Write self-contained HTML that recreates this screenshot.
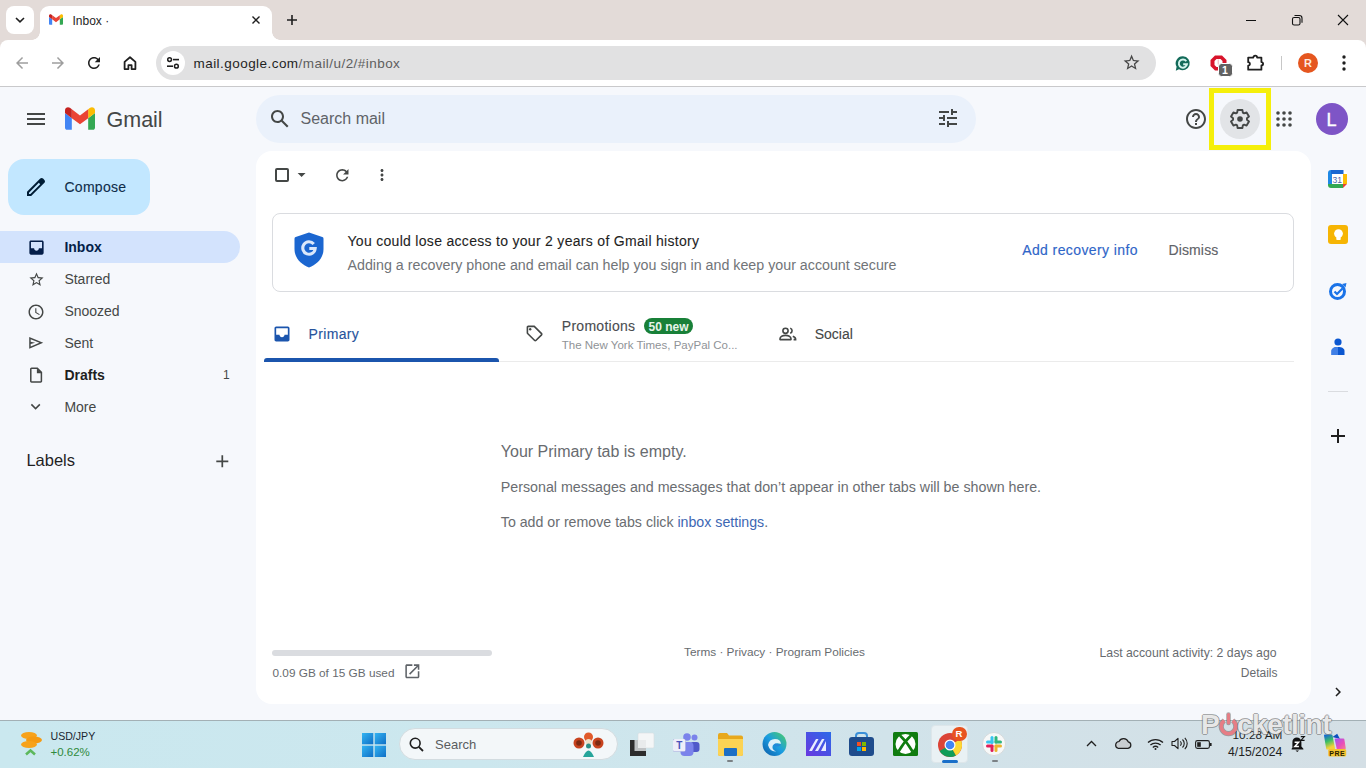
<!DOCTYPE html>
<html><head><meta charset="utf-8">
<style>
*{margin:0;padding:0;box-sizing:border-box}
html,body{width:1366px;height:768px;overflow:hidden;font-family:"Liberation Sans",sans-serif;background:#f6f8fc;position:relative}
.a{position:absolute}
.t{position:absolute;white-space:nowrap;line-height:1}
svg{position:absolute;overflow:visible}
</style></head><body>
<!-- ============ TAB STRIP ============ -->
<div class="a" style="left:0;top:0;width:1366px;height:50px;background:#e3dbd8"></div>
<div class="a" style="left:6px;top:6px;width:28px;height:28px;background:#fff;border-radius:8px"></div>
<svg style="left:14px;top:14px" width="12" height="12" viewBox="0 0 12 12"><path d="M2 4 L6 7.8 L10 4" fill="none" stroke="#1f1f1f" stroke-width="1.6"/></svg>
<div class="a" style="left:40px;top:6px;width:232px;height:34px;background:#fff;border-radius:9px 9px 0 0"></div>
<div class="a" style="left:272px;top:32px;width:8px;height:8px;background:radial-gradient(circle at 100% 0,#e3dbd8 7.5px,#fff 8px)"></div>
<div class="a" style="left:32px;top:32px;width:8px;height:8px;background:radial-gradient(circle at 0 0,#e3dbd8 7.5px,#fff 8px)"></div>
<svg style="left:49px;top:14px" width="14" height="11" viewBox="52 42 88 66"><path fill="#4285f4" d="M58 108h14V74L52 59v43c0 3.32 2.69 6 6 6"/><path fill="#34a853" d="M120 108h14c3.32 0 6-2.69 6-6V59l-20 15"/><path fill="#fbbc04" d="M120 48v26l20-15v-8c0-7.42-8.47-11.650-14.4-7.2"/><path fill="#ea4335" d="M72 74V48l24 18 24-18v26L96 92"/><path fill="#c5221f" d="M52 51v8l20 15V48l-5.6-4.2c-5.94-4.45-14.4-.22-14.4 7.2"/></svg>
<div class="t" style="left:72.5px;top:14.8px;font-size:12px;color:#1f1f1f">Inbox ·</div>
<svg style="left:251px;top:15px" width="10" height="10" viewBox="0 0 10 10"><path d="M1.5 1.5 L8.5 8.5 M8.5 1.5 L1.5 8.5" stroke="#1f1f1f" stroke-width="1.4"/></svg>
<svg style="left:286px;top:14px" width="12" height="12" viewBox="0 0 12 12"><path d="M6 1 V11 M1 6 H11" stroke="#1f1f1f" stroke-width="1.6"/></svg>
<!-- window controls -->
<svg style="left:1240px;top:0" width="126" height="40" viewBox="1240 0 126 40"><path d="M1246 20.5 H1256" stroke="#111" stroke-width="1"/><rect x="1292.5" y="17.5" width="7.5" height="7.5" rx="1.6" fill="none" stroke="#111" stroke-width="1.1"/><path d="M1294.5 15.5 H1299.3 Q1302 15.5 1302 18.2 V22.8" fill="none" stroke="#111" stroke-width="1.1"/><path d="M1338 15 L1348 25 M1348 15 L1338 25" stroke="#111" stroke-width="1.1"/></svg>
<!-- ============ TOOLBAR ============ -->
<div class="a" style="left:0;top:40px;width:1366px;height:46px;background:#fff;border-radius:8px 8px 0 0"></div>
<div class="a" style="left:0;top:86px;width:1366px;height:1px;background:#c9c9cb"></div>
<svg style="left:13px;top:54px" width="18" height="18" viewBox="0 0 24 24"><path fill="#9e9e9e" d="M20 11H7.83l5.59-5.59L12 4l-8 8 8 8 1.41-1.41L7.83 13H20v-2z"/></svg>
<svg style="left:49px;top:54px" width="18" height="18" viewBox="0 0 24 24"><path fill="#9e9e9e" d="M12 4l-1.41 1.41L16.17 11H4v2h12.17l-5.58 5.59L12 20l8-8z"/></svg>
<svg style="left:85px;top:54px" width="18" height="18" viewBox="0 0 24 24"><path fill="#1f1f1f" d="M17.65 6.35C16.2 4.9 14.21 4 12 4c-4.42 0-7.990 3.58-7.99 8s3.57 8 7.99 8c3.73 0 6.84-2.55 7.73-6h-2.08c-.82 2.33-3.04 4-5.650 4-3.31 0-6-2.69-6-6s2.69-6 6-6c1.66 0 3.14.69 4.22 1.78L13 11h7V4l-2.35 2.35z"/></svg>
<svg style="left:123px;top:56px" width="14" height="14" viewBox="0 0 14 14"><path d="M7 1.2 L12.4 5.9 V13.1 H8.6 V9.2 H5.4 V13.1 H1.6 V5.9 Z" fill="none" stroke="#1f1f1f" stroke-width="1.8" stroke-linejoin="round"/></svg>
<div class="a" style="left:156px;top:46px;width:1000px;height:34px;background:#e1e1e2;border-radius:17px"></div>
<div class="a" style="left:161px;top:51px;width:24px;height:24px;background:#fff;border-radius:12px"></div>
<svg style="left:166px;top:56px" width="14" height="14" viewBox="0 0 14 14"><circle cx="3.6" cy="3.6" r="1.9" fill="none" stroke="#1f1f1f" stroke-width="1.5"/><path d="M7 3.6 H13" stroke="#1f1f1f" stroke-width="1.6"/><circle cx="10.4" cy="10.2" r="1.9" fill="none" stroke="#1f1f1f" stroke-width="1.5"/><path d="M1 10.2 H7" stroke="#1f1f1f" stroke-width="1.6"/></svg>
<div class="t" style="left:193.5px;top:57.3px;font-size:13.5px;letter-spacing:0.45px;color:#1f1f1f">mail.google.com<span style="color:#5e5e5e">/mail/u/2/#inbox</span></div>
<svg style="left:1122.4px;top:52.9px" width="19.2" height="19.2" viewBox="0 0 24 24"><path fill="#474747" d="M22 9.24l-7.19-.62L12 2 9.19 8.63 2 9.24l5.46 4.73L5.82 21 12 17.27 18.18 21l-1.63-7.03L22 9.24zM12 15.4l-3.76 2.27 1-4.28-3.32-2.88 4.38-.38L12 6.1l1.71 4.04 4.38.38-3.32 2.88 1 4.28L12 15.4z"/></svg>
<!-- grammarly -->
<svg style="left:1174.5px;top:55.5px" width="15" height="15" viewBox="0 0 15 15"><path d="M8 0.3 A7 7 0 1 1 4 13.2 L0.8 14.8 L1.6 10.8 A7 7 0 0 1 8 0.3Z" fill="#136b5a"/><path d="M11.3 5.2 A4.1 4.1 0 1 0 12 8.2 H8.2" fill="none" stroke="#d6f5ee" stroke-width="1.9"/></svg>
<!-- red extension -->
<svg style="left:1209.5px;top:54.5px" width="17" height="16" viewBox="0 0 17 16"><path d="M5 0.5 H12 L16.5 5 V11 L12 15.5 H5 L0.5 11 V5 Z" fill="#d8142b"/><path d="M6.5 4 H10.5 L12.5 6 V10 L10.5 12 H6.5 L4.5 10 V6 Z" fill="#fff"/><rect x="7.6" y="4.5" width="1.4" height="5" fill="#f0c8cc"/></svg>
<div class="a" style="left:1217.5px;top:62.5px;width:15px;height:14.5px;background:#616161;border-radius:3.5px;border:1px solid #fff"></div>
<div class="t" style="left:1222px;top:65.4px;font-size:10.5px;font-weight:700;color:#fff">1</div>
<!-- puzzle -->
<svg style="left:1247px;top:54px" width="17" height="17" viewBox="0 0 17 17"><path d="M1.2 3.6 H6.3 A1.9 1.9 0 0 1 10.1 3.6 H14.4 V8.1 A1.7 1.7 0 0 1 14.4 11.5 V15.7 H1.2 V11.6 A1.7 1.7 0 0 0 1.2 8.2 Z" fill="none" stroke="#1f1f1f" stroke-width="1.8" stroke-linejoin="round"/></svg>
<div class="a" style="left:1280.5px;top:56px;width:1px;height:14px;background:#c7c7c7"></div>
<div class="a" style="left:1298px;top:53px;width:20px;height:20px;background:#e5561f;border-radius:10px"></div>
<div class="t" style="left:1304px;top:57.5px;font-size:11px;font-weight:700;color:#fde9df">R</div>
<svg style="left:1340px;top:55px" width="8" height="16" viewBox="0 0 8 16"><circle cx="4" cy="2" r="1.7" fill="#1f1f1f"/><circle cx="4" cy="8" r="1.7" fill="#1f1f1f"/><circle cx="4" cy="14" r="1.7" fill="#1f1f1f"/></svg>

<!-- ============ GMAIL HEADER ============ -->
<svg style="left:24px;top:107px" width="24" height="24" viewBox="0 0 24 24"><path fill="#444746" d="M3 18h18v-2H3v2zm0-5h18v-2H3v2zm0-7v2h18V6H3z"/></svg>
<svg style="left:65px;top:107px" width="30" height="23" viewBox="52 42 88 66"><path fill="#4285f4" d="M58 108h14V74L52 59v43c0 3.32 2.69 6 6 6"/><path fill="#34a853" d="M120 108h14c3.32 0 6-2.69 6-6V59l-20 15"/><path fill="#fbbc04" d="M120 48v26l20-15v-8c0-7.42-8.47-11.65-14.4-7.2"/><path fill="#ea4335" d="M72 74V48l24 18 24-18v26L96 92"/><path fill="#c5221f" d="M52 51v8l20 15V48l-5.6-4.2c-5.94-4.45-14.4-.22-14.4 7.2"/></svg>
<div class="t" style="left:106.5px;top:110px;font-size:21.5px;color:#444746">Gmail</div>
<div class="a" style="left:256px;top:95px;width:720px;height:48px;background:#eaf1fb;border-radius:24px"></div>
<svg style="left:268px;top:107px" width="24" height="24" viewBox="0 0 24 24"><path fill="#444746" d="M20.49 19l-5.73-5.73C15.53 12.2 16 10.91 16 9.5 16 5.91 13.09 3 9.5 3S3 5.91 3 9.5 5.91 16 9.5 16c1.41 0 2.7-.47 3.77-1.24L19 20.49 20.49 19zM5 9.5C5 7.01 7.01 5 9.5 5S14 7.01 14 9.5 11.990 14 9.5 14 5 11.99 5 9.5z"/></svg>
<div class="t" style="left:300.5px;top:110.8px;font-size:16px;color:#5f6368">Search mail</div>
<svg style="left:936px;top:106px" width="24" height="24" viewBox="0 0 24 24"><path fill="#444746" d="M3 17v2h6v-2H3zM3 5v2h10V5H3zm10 16v-2h8v-2h-8v-2h-2v6h2zM7 9v2H3v2h4v2h2V9H7zm14 4v-2H11v2h10zm-6-4h2V7h4V5h-4V3h-2v6z"/></svg>
<svg style="left:1184px;top:107px" width="24" height="24" viewBox="0 0 24 24"><path fill="#444746" d="M11 18h2v-2h-2v2zm1-16C6.48 2 2 6.48 2 12s4.48 10 10 10 10-4.48 10-10S17.52 2 12 2zm0 18c-4.41 0-8-3.59-8-8s3.59-8 8-8 8 3.59 8 8-3.59 8-8 8zm0-14c-2.21 0-4 1.79-4 4h2c0-1.1.9-2 2-2s2 .9 2 2c0 2-3 1.75-3 5h2c0-2.25 3-2.5 3-5 0-2.21-1.79-4-4-4z"/></svg>
<div class="a" style="left:1209px;top:88px;width:62px;height:62px;border:5px solid #f5ef0b"></div>
<div class="a" style="left:1220px;top:98.5px;width:40px;height:40px;background:#e2e4e7;border-radius:20px"></div>
<svg style="left:1228px;top:106.7px" width="24" height="24" viewBox="0 0 24 24"><path d="M9.15 5.61 L9.61 3.01 L14.39 3.01 L14.85 5.61 L16.11 6.33 L18.59 5.44 L20.98 9.58 L18.96 11.28 L18.96 12.72 L20.98 14.42 L18.59 18.56 L16.11 17.67 L14.85 18.39 L14.39 20.99 L9.61 20.99 L9.15 18.39 L7.89 17.67 L5.41 18.56 L3.02 14.42 L5.04 12.72 L5.04 11.28 L3.02 9.58 L5.41 5.44 L7.89 6.33 Z" fill="none" stroke="#444746" stroke-width="1.9" stroke-linejoin="round"/><circle cx="12" cy="12" r="2.8" fill="#444746"/></svg>
<svg style="left:1276px;top:111px" width="16" height="16" viewBox="0 0 16 16" fill="#444746"><circle cx="2" cy="2" r="1.8"/><circle cx="8" cy="2" r="1.8"/><circle cx="14" cy="2" r="1.8"/><circle cx="2" cy="8" r="1.8"/><circle cx="8" cy="8" r="1.8"/><circle cx="14" cy="8" r="1.8"/><circle cx="2" cy="14" r="1.8"/><circle cx="8" cy="14" r="1.8"/><circle cx="14" cy="14" r="1.8"/></svg>
<div class="a" style="left:1316px;top:103px;width:32px;height:32px;background:#7e55c6;border-radius:16px"></div>
<div class="t" style="left:1326.5px;top:111px;font-size:18px;color:#fff;-webkit-text-stroke:0.4px #fff">L</div>

<!-- ============ SIDEBAR ============ -->
<div class="a" style="left:8px;top:159px;width:142px;height:56px;background:#c2e7ff;border-radius:16px"></div>
<svg style="left:24px;top:175px" width="24" height="24" viewBox="0 0 24 24"><path fill="#001d35" d="M20.41 4.94l-1.35-1.35c-.78-.78-2.05-.78-2.83 0L3 16.82V21h4.18L20.41 7.77c.79-.78.79-2.05 0-2.83zm-14 14.12L5 19v-1.36l9.82-9.82 1.41 1.41-9.82 9.83z"/></svg>
<div class="t" style="left:64.4px;top:180.4px;font-size:14px;color:#0f2d4a;letter-spacing:0.3px;-webkit-text-stroke:0.12px #0f2d4a">Compose</div>
<div class="a" style="left:0;top:231px;width:240px;height:32px;background:#d3e3fd;border-radius:0 16px 16px 0"></div>
<svg style="left:26.5px;top:237.5px" width="19" height="19" viewBox="0 0 24 24"><path fill="#041e49" d="M19 3H5c-1.1 0-2 .9-2 2v14c0 1.1.9 2 2 2h14c1.1 0 2-.9 2-2V5c0-1.1-.9-2-2-2zm0 10h-4c0 1.66-1.35 3-3 3s-3-1.34-3-3H5V5h14v8z"/></svg>
<div class="t" style="left:64.4px;top:239.8px;font-size:14px;font-weight:700;color:#041e49">Inbox</div>
<svg style="left:27.5px;top:271px" width="17" height="17" viewBox="0 0 24 24"><path fill="#444746" d="M22 9.24l-7.19-.62L12 2 9.19 8.63 2 9.24l5.46 4.73L5.82 21 12 17.27 18.18 21l-1.63-7.03L22 9.24zM12 15.4l-3.76 2.27 1-4.28-3.32-2.88 4.38-.38L12 6.1l1.71 4.04 4.38.38-3.32 2.88 1 4.28L12 15.4z"/></svg>
<div class="t" style="left:64.4px;top:272.1px;font-size:14px;color:#444746">Starred</div>
<svg style="left:27px;top:302.6px" width="18" height="18" viewBox="0 0 24 24"><path fill="#444746" d="M11.99 2C6.47 2 2 6.48 2 12s4.47 10 9.99 10C17.52 22 22 17.52 22 12S17.52 2 11.99 2zM12 20c-4.42 0-8-3.58-8-8s3.58-8 8-8 8 3.58 8 8-3.58 8-8 8zm.5-13H11v6l5.25 3.15.75-1.23-4.5-2.67z"/></svg>
<div class="t" style="left:64.4px;top:304.1px;font-size:14px;color:#444746">Snoozed</div>
<svg style="left:26.8px;top:334.4px" width="17.7" height="17.7" viewBox="0 0 24 24"><path fill="#444746" d="M3 20V4l19 8Zm2-3 11.85-5L5 7v3.5l6 1.5-6 1.5Z"/></svg>
<div class="t" style="left:64.4px;top:336.1px;font-size:14px;color:#444746">Sent</div>
<svg style="left:26.9px;top:365.9px" width="18.2" height="18.2" viewBox="0 0 24 24"><path fill="#444746" d="M6 22q-.825 0-1.412-.587Q4 20.825 4 20V4q0-.825.588-1.413Q5.175 2 6 2h8l6 6v12q0 .825-.587 1.413Q18.825 22 18 22Zm0-2h12V8.8L13.2 4H6Z"/><path fill="#444746" d="M13 3 L19.5 9.5 H13Z"/></svg>
<div class="t" style="left:64.4px;top:368.1px;font-size:14px;font-weight:700;color:#1f1f1f">Drafts</div>
<div class="t" style="left:223px;top:369.3px;font-size:12px;color:#444746">1</div>
<svg style="left:26.4px;top:396.6px" width="19.2" height="19.2" viewBox="0 0 24 24"><path fill="#444746" d="M16.59 8.59L12 13.17 7.41 8.59 6 10l6 6 6-6z"/></svg>
<div class="t" style="left:64.4px;top:400.1px;font-size:14px;color:#444746">More</div>
<div class="t" style="left:26.4px;top:452.1px;font-size:16.5px;color:#1f1f1f">Labels</div>
<svg style="left:211.7px;top:450.7px" width="20.6" height="20.6" viewBox="0 0 24 24"><path fill="#444746" d="M19 13h-6v6h-2v-6H5v-2h6V5h2v6h6v2z"/></svg>

<!-- ============ MAIN CARD ============ -->
<div class="a" style="left:256px;top:151px;width:1055px;height:553px;background:#fff;border-radius:16px"></div>
<div class="a" style="left:275px;top:168px;width:14px;height:14px;border:2px solid #444746;border-radius:2px"></div>
<svg style="left:292.4px;top:164.8px" width="19.2" height="19.2" viewBox="0 0 24 24"><path fill="#444746" d="M7 10l5 5 5-5z"/></svg>
<svg style="left:332.7px;top:165.7px" width="18.6" height="18.6" viewBox="0 0 24 24"><path fill="#444746" d="M17.65 6.35C16.2 4.9 14.21 4 12 4c-4.42 0-7.99 3.58-7.99 8s3.57 8 7.99 8c3.73 0 6.84-2.55 7.73-6h-2.08c-.82 2.33-3.04 4-5.65 4-3.31 0-6-2.69-6-6s2.69-6 6-6c1.66 0 3.14.69 4.22 1.78L13 11h7V4l-2.35 2.35z"/></svg>
<svg style="left:373px;top:166px" width="18" height="18" viewBox="0 0 24 24"><path fill="#444746" d="M12 8c1.1 0 2-.9 2-2s-.9-2-2-2-2 .9-2 2 .9 2 2 2zm0 2c-1.1 0-2 .9-2 2s.9 2 2 2 2-.9 2-2-.9-2-2-2zm0 6c-1.1 0-2 .9-2 2s.9 2 2 2 2-.9 2-2-.9-2-2-2z"/></svg>

<!-- banner -->
<div class="a" style="left:272px;top:213px;width:1022px;height:79px;border:1px solid #dadce0;border-radius:8px"></div>
<svg style="left:294px;top:232px" width="30" height="36" viewBox="0 0 30 36"><path d="M15 0.6 L28.3 5 Q29.5 5.4 29.5 6.7 V17 C29.5 26 23 32.5 15 35.5 C7 32.5 0.5 26 0.5 17 V6.7 Q0.5 5.4 1.7 5 Z" fill="#1b66d0"/><path d="M19.75 12 A6.2 6.2 0 1 0 21.2 16.5 H15.3" fill="none" stroke="#dbe8fb" stroke-width="3.1"/></svg>
<div class="t" style="left:347.5px;top:234.2px;font-size:14px;color:#1f1f1f;letter-spacing:0.3px;-webkit-text-stroke:0.1px #1f1f1f">You could lose access to your 2 years of Gmail history</div>
<div class="t" style="left:347.5px;top:257.6px;font-size:14.25px;color:#717478">Adding a recovery phone and email can help you sign in and keep your account secure</div>
<div class="t" style="left:1022.2px;top:242.7px;font-size:14px;color:#2f65c8;letter-spacing:0.4px;-webkit-text-stroke:0.15px #2f65c8">Add recovery info</div>
<div class="t" style="left:1168.4px;top:242.7px;font-size:14px;color:#5f6368;letter-spacing:0.15px;-webkit-text-stroke:0.15px #5f6368">Dismiss</div>

<!-- tabs -->
<div class="a" style="left:264px;top:361px;width:1030px;height:1px;background:#ebebeb"></div>
<div class="a" style="left:264px;top:358px;width:235px;height:4px;background:#1b55ad;border-radius:3px 3px 0 0"></div>
<svg style="left:272px;top:324px" width="20" height="20" viewBox="0 0 24 24"><path fill="#1b55ad" d="M19 3H5c-1.1 0-2 .9-2 2v14c0 1.1.9 2 2 2h14c1.1 0 2-.9 2-2V5c0-1.1-.9-2-2-2zm0 10h-4c0 1.66-1.35 3-3 3s-3-1.34-3-3H5V5h14v8z"/></svg>
<div class="t" style="left:308.5px;top:326.9px;font-size:14px;color:#27539c;letter-spacing:0.35px;-webkit-text-stroke:0.12px #27539c">Primary</div>
<svg style="left:525.4px;top:324.4px" width="19.2" height="19.2" viewBox="0 0 24 24"><path fill="#444746" d="M21.41 11.41l-8.83-8.83c-.37-.37-.88-.58-1.41-.58H4c-1.1 0-2 .9-2 2v7.17c0 .53.21 1.04.59 1.41l8.83 8.83c.78.78 2.05.78 2.83 0l7.17-7.170c.78-.78.78-2.04-.01-2.83zM12.83 20L4 11.17V4h7.17L20 12.83 12.83 20z"/><circle cx="6.5" cy="6.5" r="1.5" fill="#444746"/></svg>
<div class="t" style="left:561.8px;top:319.2px;font-size:14px;color:#4a4d50;letter-spacing:0.28px;-webkit-text-stroke:0.12px #4a4d50">Promotions</div>
<div class="a" style="left:644px;top:318px;width:49px;height:16px;background:#188038;border-radius:8px"></div>
<div class="t" style="left:648.5px;top:320.5px;font-size:12px;font-weight:700;color:#e6f4ea">50 new</div>
<div class="t" style="left:561.8px;top:340.3px;font-size:11.5px;color:#8f9397">The New York Times, PayPal Co...</div>
<svg style="left:779px;top:327px" width="18" height="14" viewBox="0 0 18 14"><circle cx="6.5" cy="3.8" r="2.6" fill="none" stroke="#444746" stroke-width="1.6"/><path d="M1 12.6 V11.8 C1 9.6 3.8 8.4 6.5 8.4 C9.2 8.4 12 9.6 12 11.8 V12.6 Z" fill="none" stroke="#444746" stroke-width="1.6" stroke-linejoin="round"/><path d="M11.2 1.3 A2.6 2.6 0 0 1 11.2 6.3" fill="none" stroke="#444746" stroke-width="1.6"/><path d="M13.8 9.2 C15.5 9.8 16.6 10.8 16.6 12 V12.6 H14.6" fill="none" stroke="#444746" stroke-width="1.6"/></svg>
<div class="t" style="left:814.7px;top:327px;font-size:14px;color:#444746;-webkit-text-stroke:0.1px #444746">Social</div>

<!-- empty state -->
<div class="t" style="left:500.8px;top:444.3px;font-size:16px;color:#686b6f">Your Primary tab is empty.</div>
<div class="t" style="left:500.8px;top:480px;font-size:14.25px;color:#6a6d71">Personal messages and messages that don’t appear in other tabs will be shown here.</div>
<div class="t" style="left:500.8px;top:514.6px;font-size:14.2px;color:#6a6d71">To add or remove tabs click <span style="color:#3d67b3">inbox settings</span>.</div>

<!-- footer -->
<div class="a" style="left:272px;top:650px;width:220px;height:6px;background:#dadce0;border-radius:3px"></div>
<div class="t" style="left:272.5px;top:668.3px;font-size:11.8px;color:#676b6f">0.09 GB of 15 GB used</div>
<svg style="left:402.6px;top:662.4px" width="18.7" height="18.7" viewBox="0 0 24 24"><path fill="#5f6368" d="M19 19H5V5h7V3H5c-1.11 0-2 .9-2 2v14c0 1.1.89 2 2 2h14c1.1 0 2-.9 2-2v-7h-2v7zM14 3v2h3.59l-9.83 9.83 1.41 1.41L19 6.41V10h2V3h-7z"/></svg>
<div class="t" style="left:684px;top:646.7px;font-size:11.8px;color:#676b6f">Terms · Privacy · Program Policies</div>
<div class="t" style="left:1099.5px;top:647px;font-size:12.25px;color:#676b6f">Last account activity: 2 days ago</div>
<div class="t" style="left:1240.8px;top:666.5px;font-size:12px;color:#676b6f">Details</div>

<!-- ============ RIGHT PANEL ============ -->
<svg style="left:1328px;top:170px" width="19" height="18" viewBox="0 0 19 18"><path d="M3 0 H16 L19 3 V14 L15 18 H3 Q0 18 0 15 V3 Q0 0 3 0Z" fill="#fff"/><path d="M0 3 Q0 0 3 0 H4 V14 H0Z" fill="#1e88e5"/><path d="M3 0 H15.5 V4 H3Z" fill="#1967d2"/><path d="M15 4 H19 V14 H15Z" fill="#fbbc04"/><path d="M0 14 H15 V18 H3 Q0 18 0 15Z" fill="#34a853"/><path d="M15 14 H19 L15 18Z" fill="#ea4335"/><text x="9.3" y="12.6" font-family="Liberation Sans" font-size="8.5" fill="#4a67a8" text-anchor="middle">31</text></svg>
<div class="a" style="left:1328px;top:225px;width:19.5px;height:19px;background:#f6b504;border-radius:3px"></div>
<svg style="left:1331.5px;top:228px" width="13" height="14" viewBox="0 0 13 14"><circle cx="6.5" cy="5.6" r="4.4" fill="#fff"/><rect x="4.3" y="9" width="4.4" height="3" rx="0.8" fill="#fff"/></svg>
<svg style="left:1329px;top:282px" width="19" height="18" viewBox="0 0 19 18"><circle cx="8.5" cy="9.5" r="7" fill="none" stroke="#1a73e8" stroke-width="3"/><path d="M5.5 9.5 L8 12 L13.5 6.5" fill="none" stroke="#1a73e8" stroke-width="2.2"/><path d="M13 2 L17.5 1 L16.5 5.5Z" fill="#1a73e8"/></svg>
<svg style="left:1331px;top:338px" width="14" height="17" viewBox="0 0 14 17"><circle cx="7" cy="4" r="3.6" fill="#0b57d0"/><path d="M0.5 17 V13 C0.5 10.5 3 9 7 9 C11 9 13.5 10.5 13.5 13 V17Z" fill="#0b57d0"/><path d="M0.5 13 C0.5 10.5 3 9 7 9 V17 H0.5Z" fill="#3f7fe6"/></svg>
<div class="a" style="left:1328px;top:391px;width:20px;height:1px;background:#dadce0"></div>
<svg style="left:1326px;top:424px" width="24" height="24" viewBox="0 0 24 24"><path fill="#1f1f1f" d="M19 13h-6v6h-2v-6H5v-2h6V5h2v6h6v2z"/></svg>
<svg style="left:1328.8px;top:683px" width="18" height="18" viewBox="0 0 24 24"><path fill="#1f1f1f" d="M10 6L8.59 7.41 13.17 12l-4.58 4.59L10 18l6-6z"/></svg>

<!-- ============ TASKBAR ============ -->
<div class="a" style="left:0;top:720px;width:1366px;height:48px;background:linear-gradient(90deg,#cae8ef,#cce7ee 35%,#d1e3ea 65%,#d4dfe5)"></div>
<div class="a" style="left:0;top:720px;width:1366px;height:1px;background:#a3b0b5"></div>

<!-- widget -->
<svg style="left:19px;top:731px" width="24" height="25" viewBox="0 0 24 25"><ellipse cx="10" cy="4.5" rx="8" ry="3.5" fill="#f7a21b"/><ellipse cx="15" cy="9" rx="8" ry="3.5" fill="#f59a12"/><ellipse cx="10" cy="13.5" rx="8" ry="3.5" fill="#f7a21b"/><path d="M7 23.5 L11.5 19.5 L16 23.5" fill="none" stroke="#5cb85c" stroke-width="2.5"/></svg>
<div class="t" style="left:50.5px;top:731px;font-size:10.6px;color:#1a2630">USD/JPY</div>
<div class="t" style="left:50.5px;top:746.8px;font-size:11.5px;color:#2f8a3c">+0.62%</div>
<!-- windows logo -->
<svg style="left:362px;top:732.5px" width="24" height="24" viewBox="0 0 24 24"><defs><linearGradient id="wg" x1="0" y1="0" x2="1" y2="1"><stop offset="0" stop-color="#33b4f2"/><stop offset="1" stop-color="#0f6fc6"/></linearGradient></defs><rect x="0" y="0" width="11.3" height="11.3" fill="url(#wg)"/><rect x="12.7" y="0" width="11.3" height="11.3" fill="url(#wg)"/><rect x="0" y="12.7" width="11.3" height="11.3" fill="url(#wg)"/><rect x="12.7" y="12.7" width="11.3" height="11.3" fill="url(#wg)"/></svg>
<!-- search -->
<div class="a" style="left:398.5px;top:728.3px;width:219px;height:31.5px;background:#f3f7f9;border:1px solid #d3dce0;border-radius:16px"></div>
<svg style="left:409px;top:737px" width="15" height="15" viewBox="0 0 15 15"><circle cx="6.2" cy="6.2" r="4.9" fill="none" stroke="#1f1f1f" stroke-width="1.6"/><path d="M9.8 9.8 L14 14" stroke="#1f1f1f" stroke-width="1.8"/></svg>
<div class="t" style="left:435px;top:737.8px;font-size:13px;color:#5a5d60">Search</div>
<svg style="left:573px;top:732px" width="31" height="26" viewBox="0 0 31 26"><circle cx="15.5" cy="5" r="4.5" fill="#e05a2b"/><circle cx="6" cy="11" r="5.5" fill="#c8431e"/><circle cx="25" cy="11" r="5.5" fill="#c8431e"/><circle cx="6" cy="11" r="2.8" fill="#7d2a12"/><circle cx="25" cy="11" r="2.8" fill="#7d2a12"/><circle cx="15.5" cy="10" r="3" fill="#f0e0c8"/><path d="M10 25 Q15.5 12 21 25Z" fill="#27a59a"/><circle cx="15.5" cy="14" r="2.5" fill="#2b8f86"/></svg>
<!-- task view -->
<svg style="left:630px;top:732.5px" width="24" height="23" viewBox="0 0 24 23"><rect x="8" y="0" width="16" height="15" rx="1.5" fill="#f4f6f7" stroke="#d9dde0" stroke-width="0.6"/><rect x="0" y="7" width="16" height="16" fill="#2d2d2d"/><rect x="4.5" y="7" width="11.5" height="11" fill="#bfc2c4"/><rect x="8" y="7" width="8" height="8" fill="#e9ebec"/></svg>
<!-- teams -->
<svg style="left:673px;top:732.5px" width="27" height="24" viewBox="0 0 27 24"><circle cx="21.5" cy="4.5" r="3" fill="#7b83eb"/><rect x="17" y="9" width="9.5" height="10" rx="3" fill="#5059c9"/><circle cx="14" cy="4" r="3.8" fill="#7b83eb"/><rect x="7.5" y="9" width="13" height="14" rx="4" fill="#7b83eb"/><rect x="0" y="6" width="12.5" height="12.5" rx="1.5" fill="#4b53bc"/><rect x="0" y="6" width="12.5" height="12.5" rx="1.5" fill="#fff" opacity="0.9"/><text x="6.3" y="16" font-family="Liberation Sans" font-size="10" font-weight="700" fill="#4b53bc" text-anchor="middle">T</text></svg>
<!-- explorer -->
<svg style="left:717.5px;top:732.5px" width="25" height="23" viewBox="0 0 25 23"><path d="M0 2 Q0 0 2 0 H9 L11 2.5 H23 Q25 2.5 25 4.5 V21 Q25 23 23 23 H2 Q0 23 0 21Z" fill="#e8a81c"/><path d="M0 6 H25 V21 Q25 23 23 23 H2 Q0 23 0 21Z" fill="#fcd354"/><rect x="6" y="15" width="13" height="8" rx="1" fill="#1d6fc4"/></svg>
<div class="a" style="left:727px;top:759.5px;width:6px;height:2px;background:#7b8185;border-radius:1px"></div>
<!-- edge -->
<svg style="left:761.5px;top:732px" width="25" height="24" viewBox="0 0 25 24"><defs><linearGradient id="eg" x1="0" y1="1" x2="1" y2="0"><stop offset="0" stop-color="#0c59a4"/><stop offset="0.5" stop-color="#1b9de2"/><stop offset="1" stop-color="#4fd15e"/></linearGradient></defs><circle cx="12.5" cy="12" r="12" fill="url(#eg)"/><path d="M6 13 Q7 7 13 7 Q18.5 7 19 12 Q14 10 11 13 Q9 17 14 19.5 Q8 20 6 13Z" fill="#fff" opacity="0.85"/><path d="M12 12.5 Q13 11 16 12 Q19 13 19 11 Q19 14 16 14.5 Q12 15 12 12.5Z" fill="#2488d8"/></svg>
<!-- MA app -->
<svg style="left:805.5px;top:732px" width="25" height="24" viewBox="0 0 25 24"><defs><linearGradient id="mg" x1="0" y1="1" x2="1" y2="0"><stop offset="0" stop-color="#6a38e0"/><stop offset="1" stop-color="#2a6ae8"/></linearGradient></defs><rect width="25" height="24" fill="url(#mg)"/><path d="M3 19 L10 7 H12.5 L6 19Z M9 19 L16 7 H18.5 L12 19Z M15 19 L20 9 V19Z" fill="#e8ecff"/></svg>
<!-- store -->
<svg style="left:849px;top:731.5px" width="25" height="24" viewBox="0 0 25 24"><path d="M7 6 V4 Q7 1 10 1 H15 Q18 1 18 4 V6" fill="none" stroke="#3b8fd8" stroke-width="2"/><rect x="0" y="5" width="25" height="19" rx="3" fill="#1f4c8c"/><rect x="8" y="10" width="4" height="4" fill="#f25022"/><rect x="13" y="10" width="4" height="4" fill="#7fba00"/><rect x="8" y="15" width="4" height="4" fill="#00a4ef"/><rect x="13" y="15" width="4" height="4" fill="#ffb900"/></svg>
<!-- xbox -->
<svg style="left:893.3px;top:732px" width="25" height="24" viewBox="0 0 25 24"><rect width="25" height="24" rx="1.5" fill="#107c10"/><circle cx="12.5" cy="12" r="10" fill="#fff"/><path d="M5.5 19.5 Q11 10 18 3.5 M19.5 19.5 Q14 10 7 3.5" fill="none" stroke="#107c10" stroke-width="2.6"/></svg>
<!-- chrome -->
<div class="a" style="left:931px;top:725px;width:37px;height:38px;background:#e9f1f4;border-radius:4px;border:1px solid #dde6ea"></div>
<svg style="left:937px;top:731.5px" width="26" height="26" viewBox="0 0 26 26"><circle cx="13" cy="13" r="12" fill="#db4437"/><path d="M13 13 L2.6 19 A12 12 0 0 0 19 23.4Z" fill="#0f9d58"/><path d="M13 13 L19 23.4 A12 12 0 0 0 23.4 7Z" fill="#fdd835"/><path d="M13 13 L23.4 7 L13 7Z" fill="#db4437"/><circle cx="13" cy="13" r="5.5" fill="#fff"/><circle cx="13" cy="13" r="4.3" fill="#4285f4"/></svg>
<div class="a" style="left:951.5px;top:726.5px;width:15px;height:14px;background:#e8531f;border-radius:7px"></div>
<div class="t" style="left:955.5px;top:729px;font-size:9.5px;font-weight:700;color:#fff">R</div>
<div class="a" style="left:942px;top:759.5px;width:16px;height:3px;background:#1a6fc9;border-radius:1.5px"></div>
<!-- slack -->
<svg style="left:981.5px;top:732px" width="24" height="24" viewBox="0 0 24 24"><circle cx="12" cy="12" r="11.5" fill="#f7f8f8" stroke="#d0d4d6" stroke-width="0.8"/><rect x="8.5" y="4" width="3" height="8" rx="1.5" fill="#36c5f0"/><rect x="4" y="8.5" width="7.5" height="3" rx="1.5" fill="#36c5f0"/><rect x="12.5" y="4" width="3" height="7.5" rx="1.5" fill="#2eb67d"/><rect x="12.5" y="8.5" width="7.5" height="3" rx="1.5" fill="#2eb67d"/><rect x="4" y="12.5" width="7.5" height="3" rx="1.5" fill="#e01e5a"/><rect x="8.5" y="12.5" width="3" height="7.5" rx="1.5" fill="#e01e5a"/><rect x="12.5" y="12.5" width="7.5" height="3" rx="1.5" fill="#ecb22e"/><rect x="12.5" y="12.5" width="3" height="7.5" rx="1.5" fill="#ecb22e"/></svg>
<div class="a" style="left:991.5px;top:759.5px;width:6px;height:2px;background:#7b8185;border-radius:1px"></div>
<!-- tray -->
<svg style="left:1086px;top:740px" width="11" height="7" viewBox="0 0 11 7"><path d="M1 6 L5.5 1.5 L10 6" fill="none" stroke="#1f1f1f" stroke-width="1.3"/></svg>
<svg style="left:1114px;top:738px" width="18" height="11" viewBox="0 0 18 11"><path d="M4 10.3 H14 A3.3 3.3 0 0 0 14.2 3.8 A5 5 0 0 0 5 3.5 A3.5 3.5 0 0 0 4 10.3Z" fill="#c9ced1" stroke="#1f1f1f" stroke-width="1.2"/></svg>
<svg style="left:1147px;top:737.5px" width="17" height="12" viewBox="0 0 17 12"><path d="M1 4.5 A11 11 0 0 1 16 4.5 M3.4 7 A7.6 7.6 0 0 1 13.6 7 M5.8 9.4 A4.2 4.2 0 0 1 11.2 9.4" fill="none" stroke="#1f1f1f" stroke-width="1.3"/><circle cx="8.5" cy="11" r="1" fill="#1f1f1f"/></svg>
<svg style="left:1170.5px;top:737px" width="17" height="13" viewBox="0 0 17 13"><path d="M1 4.5 H3.5 L7 1.3 V11.7 L3.5 8.5 H1Z" fill="none" stroke="#1f1f1f" stroke-width="1.1" stroke-linejoin="round"/><path d="M9.3 4.3 A3 3 0 0 1 9.3 8.7 M11.5 2.5 A5.5 5.5 0 0 1 11.5 10.5 M13.8 0.8 A8 8 0 0 1 13.8 12.2" fill="none" stroke="#1f1f1f" stroke-width="1.1"/></svg>
<svg style="left:1195px;top:740px" width="17" height="9" viewBox="0 0 17 9"><rect x="0.6" y="0.6" width="13.8" height="7.8" rx="1.8" fill="none" stroke="#1f1f1f" stroke-width="1.1"/><rect x="2.2" y="2.2" width="3.6" height="4.6" fill="#1f1f1f"/><rect x="15" y="3" width="1.6" height="3" fill="#1f1f1f"/></svg>
<div class="t" style="left:1232.5px;top:729.9px;font-size:11.8px;color:#1f1f1f">10:28 AM</div>
<div class="t" style="left:1228px;top:746.1px;font-size:12.2px;color:#1f1f1f">4/15/2024</div>
<svg style="left:1291px;top:736px" width="15" height="17" viewBox="0 0 15 17"><path d="M5.8 1.5 A4.6 4.6 0 0 1 10.4 6.1 V10.5 L12.4 12.8 V13.6 H0.6 V12.8 L1.4 11.8 V6.1 A4.4 4.4 0 0 1 5.8 1.5Z" fill="#111"/><path d="M4.5 14.6 H8 L6.25 16 Z" fill="#111"/><path d="M3.6 6.2 H7.6 L3.8 10.6 H7.9" fill="none" stroke="#fff" stroke-width="1.5"/><path d="M9.8 0.6 H13.4 L9.9 4.4 H13.6" fill="none" stroke="#111" stroke-width="1.1"/></svg>
<svg style="left:1322px;top:733px" width="25" height="24" viewBox="0 0 25 24"><defs><linearGradient id="cpl" x1="0" y1="0" x2="0.3" y2="1"><stop offset="0" stop-color="#1769d3"/><stop offset="0.5" stop-color="#3cbf62"/><stop offset="1" stop-color="#f3cf3a"/></linearGradient><linearGradient id="cpr" x1="0" y1="0" x2="1" y2="1"><stop offset="0" stop-color="#a552f0"/><stop offset="0.6" stop-color="#e94fb8"/><stop offset="1" stop-color="#f27a9a"/></linearGradient></defs><path d="M3 2.5 H9.5 L12 15.5 H5.2 Z" fill="url(#cpl)" stroke="url(#cpl)" stroke-width="2" stroke-linejoin="round"/><path d="M10.5 4 L15.2 0.8 L18 6 Z" fill="#0b4fbf"/><path d="M13.5 6.2 H21.5 L23 15.5 H15.5 Z" fill="url(#cpr)" stroke="url(#cpr)" stroke-width="1.6" stroke-linejoin="round"/><rect x="6.2" y="16" width="18" height="7.5" rx="1.5" fill="#f4c230"/><text x="15.3" y="22.5" font-family="Liberation Sans" font-size="7" font-weight="700" fill="#2a1e00" text-anchor="middle" letter-spacing="0.6">PRE</text></svg>
<!-- watermark -->
<div class="t" style="left:1201px;top:710.5px;font-size:28px;font-weight:700;color:rgba(255,255,255,0.85);letter-spacing:-0.6px;text-shadow:1px 0 0 rgba(100,100,100,.55),-1px 0 0 rgba(100,100,100,.55),0 1px 0 rgba(100,100,100,.55),0 -1px 0 rgba(100,100,100,.55)">P</div>
<svg style="left:1219px;top:713px" width="19" height="24" viewBox="0 0 19 24"><path d="M5.2 7.5 A7.3 7.3 0 1 0 13.8 7.5" fill="none" stroke="rgba(90,90,90,.5)" stroke-width="5.2"/><path d="M5.2 7.5 A7.3 7.3 0 1 0 13.8 7.5" fill="none" stroke="#e67d85" stroke-width="3.6"/><path d="M9.5 1.5 V10" stroke="rgba(90,90,90,.5)" stroke-width="4.6" stroke-linecap="round"/><path d="M9.5 1.5 V10" stroke="#e67d85" stroke-width="3" stroke-linecap="round"/></svg>
<div class="t" style="left:1237px;top:710.5px;font-size:28px;font-weight:700;color:rgba(255,255,255,0.85);letter-spacing:-0.5px;text-shadow:1px 0 0 rgba(100,100,100,.55),-1px 0 0 rgba(100,100,100,.55),0 1px 0 rgba(100,100,100,.55),0 -1px 0 rgba(100,100,100,.55)">cketlint</div>
</body></html>
